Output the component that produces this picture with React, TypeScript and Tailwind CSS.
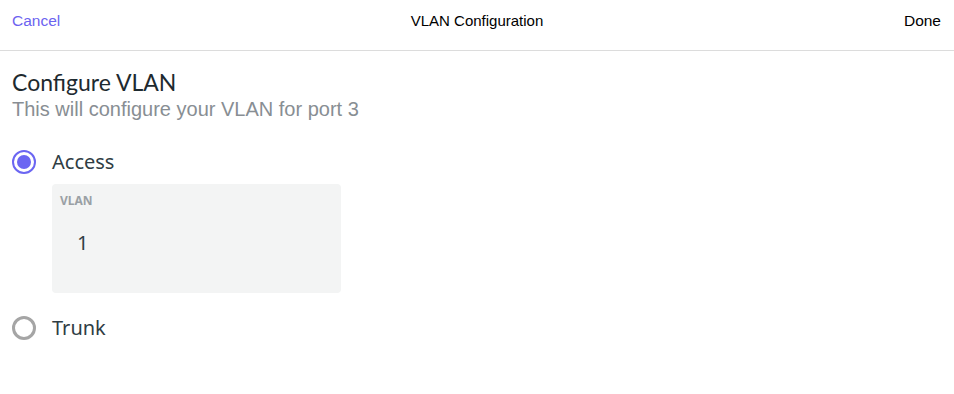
export default function App() {
  return (
    <div className="w-[954px] h-[394px] bg-white" style={{ fontFamily: "Lato, 'Noto Sans', sans-serif" }}>
      {/* Header */}
      <div
        className="h-[51px] flex items-center justify-between px-3 border-b border-[#dcdcdc] relative"
        style={{ fontFamily: "'Liberation Sans', Arial, sans-serif" }}
      >
        <button className="text-[15.5px] text-[#6c63f0] pb-[8px]">Cancel</button>
        <div className="absolute left-0 right-0 text-center text-[15px] text-black pointer-events-none pb-[8px]">
          VLAN Configuration
        </div>
        <button className="text-[15.5px] text-black pb-[8px] pr-[1px]">Done</button>
      </div>

      <div className="px-3 pt-[15px]">
        <h2 className="text-[23px] leading-[32px] text-[#1e2a30]">Configure VLAN</h2>
        <p
          className="text-[20px] leading-[22px] text-[#888e93]"
          style={{ fontFamily: "'Liberation Sans', Arial, sans-serif" }}
        >
          This will configure your VLAN for port 3
        </p>

        <div className="mt-[27px] flex items-center gap-4" style={{ fontFamily: "'Noto Sans', sans-serif" }}>
          <span className="w-6 h-6 rounded-full border-2 border-[#6b66f2] flex items-center justify-center">
            <span className="w-[14px] h-[14px] rounded-full bg-[#6b66f2]" />
          </span>
          <span className="text-[20px] text-[#2f3d44]">Access</span>
        </div>

        <div className="ml-10 mt-[7px] w-[289px] h-[109px] bg-[#f3f4f4] rounded-[4px] px-2 pt-[10px]" style={{ fontFamily: "'Noto Sans', sans-serif" }}>
          <div className="text-[12px] font-bold text-[#9aa0a5] leading-[14px]">VLAN</div>
          <div className="text-[20px] text-[#2f3d44] pl-[17px] mt-[20px]">1</div>
        </div>

        <div className="mt-[20px] flex items-center gap-4" style={{ fontFamily: "'Noto Sans', sans-serif" }}>
          <span className="w-6 h-6 rounded-full border-[3px] border-[#a5a5a5]" />
          <span className="text-[20px] text-[#2f3d44]">Trunk</span>
        </div>
      </div>
    </div>
  );
}
